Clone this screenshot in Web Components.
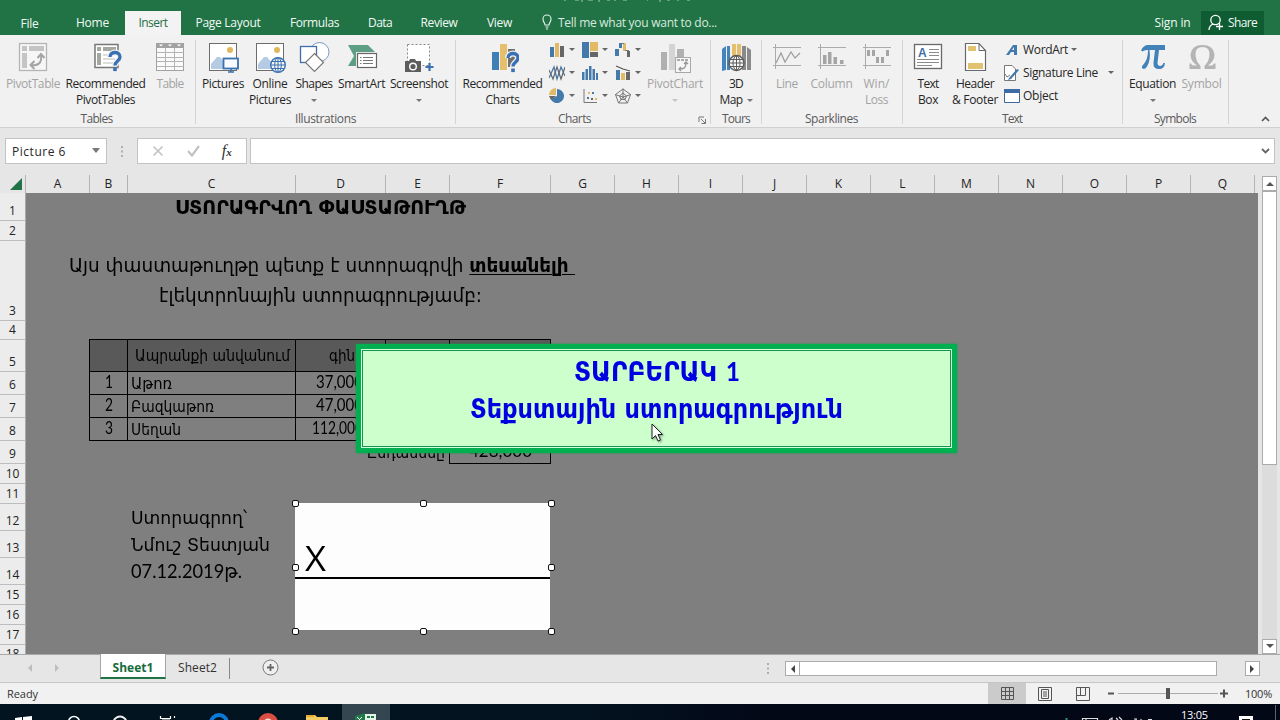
<!DOCTYPE html>
<html lang="en">
<head>
<meta charset="utf-8">
<title>Excel</title>
<style>
html,body{margin:0;height:720px;overflow:hidden;background:#e6e6e6}
body{font-family:"Open Sans","DejaVu Sans",sans-serif;font-size:12px;color:#262626}
</style>
</head>
<body>
<excel-window></excel-window>
<script>
const define=(name,html,init)=>customElements.define(name,class extends HTMLElement{
  connectedCallback(){
    if(this.shadowRoot)return;
    const root=this.attachShadow({mode:'open'});
    const t=document.createElement('template');
    t.innerHTML=typeof html==='function'?html(this):html;
    root.append(t.content.cloneNode(true));
    if(init)init(this,root);
  }
});

/* Text fitted to a width: tracking by default, horizontal scale with the "s" attribute. */
define('fit-text',`<style>:host{display:inline-block;white-space:nowrap;text-align:left}span{display:inline-block;transform-origin:0 50%;white-space:pre}</style><span><slot></slot></span>`,(h,r)=>{
  const w=+h.getAttribute('w');if(!w)return;
  const s=r.querySelector('span'),n=s.getBoundingClientRect().width;
  h.style.width=w+'px';
  if(h.hasAttribute('s'))s.style.transform=`scaleX(${w/n})`;
  else s.style.letterSpacing=(w-n)/h.textContent.length+'px';
});

const S='fill="none" stroke=';
const question=(x,y)=>`<path d="M${x} ${y+4}c0-6 10-6 10 0c0 4-5 4-5 9" ${S}"#f1f1f1" stroke-width="6"/><path d="M${x} ${y+4}c0-6 10-6 10 0c0 4-5 4-5 8.5" ${S}"#3a70b4" stroke-width="3.3"/><rect x="${x+3.2}" y="${y+14.5}" width="3.6" height="3.6" fill="#3a70b4"/>`;
const globe=(c)=>`<circle cx="24" cy="24" r="7.3" fill="#f5f5f5" stroke="${c}" stroke-width="1.4"/><ellipse cx="24" cy="24" rx="3.3" ry="7.3" ${S}"${c}"/><path d="M24 17v14M17 24h14M18 20.500h12M18 27.500h12" ${S}"${c}"/>`;
const photo=`<rect x="2.500" y="2.500" width="27" height="27" fill="#fff" stroke="#6d6d6d"/><circle cx="23" cy="9" r="3" fill="#e2b75c"/><path d="M4 28v-5l6-7h3l6 7v5z" fill="#b5cbe3"/>`;
const ICON={
pivot:`<rect x="2.500" y="2.500" width="27" height="27" stroke="#b4b4b4" stroke-width="1.300" fill="#f6f6f6"/><path d="M5 5h5v5H5zM12 5h15v5H12zM5 12h5v15H5z" fill="#c4c4c4"/><path d="M15 24c7 1 10-3 9-10M20.500 17l3.500-4 3.500 4M17.500 20l-4 4 4 4" ${S}"#a4a4a4" stroke-width="2"/>`,
recpivot:`<rect x="5" y="3.500" width="23" height="23" fill="#fff" stroke="#777" stroke-width="1.500"/><path d="M7 6h4v4H7zM13 6h13v4H13zM7 12h4v12H7z" fill="#a5a8a0"/><path d="M13 14h12M13 18h12M13 22h12" stroke="#bbb"/>${question(20,12)}`,
table:`<rect x="2.500" y="3" width="27" height="26.500" fill="#fafafa" stroke="#a2a2a2"/><path d="M2 2h28v5H2z" fill="#a2a2a2"/><path d="M5 3.500h4l-2 2zM14 3.500h4l-2 2zM23 3.500h4l-2 2z" fill="#fff"/><path d="M3 11.500h27M3 16.500h27M3 20.500h27M3 25.500h27M11.500 7v22M20.500 7v22" stroke="#b4b4b4"/>`,
pictures:`${photo}<rect x="16.500" y="17.500" width="14.500" height="10" fill="#f8fbff" stroke="#3a72b0" stroke-width="1.800"/><path d="M21 31h6M24 28v3" stroke="#3a72b0" stroke-width="1.500"/>`,
online:`${photo}${globe('#3a72b0')}`,
shapes:`<circle cx="21.500" cy="11" r="9.500" fill="#fff" stroke="#7a9cc4"/><rect x="2.500" y="5.500" width="16" height="16" fill="#fff" stroke="#3f6ea6" stroke-width="1.300"/><path d="M16.500 12.500l9 9-9 9-9-9z" fill="#fff" stroke="#777" stroke-width="1.200"/>`,
smartart:`<path d="M2 4h20l7 7-4 6H12v8H2l6-10z" fill="#5c9f85"/><rect x="10" y="11" width="22" height="17" fill="#f1f1f1"/><rect x="11.500" y="12.500" width="19" height="14" fill="#fff" stroke="#666" stroke-width="1.200"/><path d="M17 16.500h10M17 19.500h10M17 22.500h10M14 16.500h1.500M14 19.500h1.500M14 22.500h1.500" stroke="#777"/>`,
screenshot:`<rect x="4.500" y="3.500" width="22" height="21" fill="#fff" stroke="#888" stroke-dasharray="2 2"/><path d="M2 20h4l1-2h5l1 2h5v11H2z" fill="#5d5d5d"/><circle cx="10" cy="25.500" r="3.300" fill="#5d5d5d" stroke="#fff" stroke-width="1.400"/><path d="M26.500 22v8M22.500 26h8" stroke="#3a72b0" stroke-width="2.200"/>`,
reccharts:`<path d="M5 11h7v18H5z" fill="#3f7fb5"/><path d="M13 3h7v26h-7z" fill="#e5bf6c"/><path d="M21 8h7v18h-7z" fill="#707070"/>${question(21,13)}`,
pivotchart:`<path d="M2 11h6v18H2z" fill="#b0b0b0"/><path d="M10 3h6v26h-6z" fill="#d4d4d4"/><path d="M18 8h7v12h-7z" fill="#b0b0b0"/><rect x="16.500" y="16.500" width="15" height="15" fill="#f6f6f6" stroke="#a8a8a8"/><path d="M18 19h12" stroke="#aaa" stroke-width="2" stroke-dasharray="3 1"/><path d="M20 28c5 0 7-1 7-6M25 23l2-2 2 2M22 26l-2 2 2 2" ${S}"#999" stroke-width="1.400"/>`,
map:`<path d="M2 8l4-3v24l-4 1zM7 5h3v24H7z" fill="#4585bb"/><path d="M12 3h4v16h-4zM17 3h4v16h-4z" fill="#e5bf6c"/><path d="M22 5h4v24h-4zM27 6l4 3v20h-4z" fill="#8a8a8a"/><circle cx="16.500" cy="22" r="7.500" fill="#f8f8f8" stroke="#5b5b5b" stroke-width="1.400"/><path d="M16.500 15v14M9 22h15M10 18.500h13M10 25.500h13" stroke="#5b5b5b"/><ellipse cx="16.500" cy="22" rx="3.500" ry="7" ${S}"#5b5b5b"/>`,
line:`<path d="M2 6.500h28M2 24.500h28M4.500 3v25" stroke="#ababab"/><path d="M5 22l5-10 4 9 6-10 4 6 5-5" ${S}"#a0a0a0" stroke-width="1.300"/>`,
column:`<path d="M2 6.500h28M2 24.500h28M4.500 3v25" stroke="#ababab"/><path d="M7 14h3.500v9H7zM12 11h3.500v12H12zM17.500 16H21v7h-3.500zM24 19h3.500v4H24z" fill="#a5a5a5"/>`,
win:`<path d="M2 6.500h28M2 24.500h28M4.500 3v25" stroke="#ababab"/><path d="M6 9h3v6H6zM11 9h3v6h-3zM25 9h3v6h-3zM15 16h3v6h-3zM20 16h3v6h-3z" fill="#a5a5a5"/>`,
textbox:`<rect x="2.500" y="3.500" width="27" height="24" fill="#fff" stroke="#696969" stroke-width="1.300"/><text x="6" y="16" font-family="Liberation Sans" font-weight="bold" font-size="12" fill="#3f6fab">A</text><path d="M17 8.500h10M17 11.500h10M17 14.500h10M5 18.500h22M5 21.500h22M5 24.500h15" stroke="#8c8c8c"/>`,
header:`<path d="M6.500 2.500H20l6.500 7v20h-20z" fill="#fff" stroke="#696969" stroke-width="1.200"/><path d="M20 2.500v7h6.500" ${S}"#696969"/><path d="M9 5h8v5H9zM9 22h15v6H9z" fill="#e2c170"/>`,
pi:`<path d="M4 9.500Q6.500 4 11 4h17v5h-6l-1.500 13q0 3 3 3 2 0 3-3h1.500q-.5 6-6 6-6 0-5.500-6l1.500-13h-5.500Q14 19 10 25.500 8 29 5.500 27.500 4 26 6 24 11 19 11 9 7 8.800 5.500 10.500z" fill="#4282b8"/>`,
omega:`<path d="M3.500 22.500H5q.5 2 3 2h3Q4.500 20 4.500 13.500 5.500 4 16.500 4T28.500 13.500Q28.500 20 22 24.500h3q2.500 0 3-2h1.500V28H18.500v-3Q23.500 20 23.500 13 23.500 6 16.500 6T9.500 13q0 7 5 12v3h-11z" fill="#b4b4b4"/>`
};
define('ribbon-icon',h=>`<style>:host{display:block;width:32px;height:32px}svg{display:block}</style><svg width="32" height="32" viewBox="0 0 32 32">${ICON[h.getAttribute('name')]}</svg>`);

/* Large ribbon button: icon over one or two caption lines; "|w" sets a caption width. */
define('ribbon-button',h=>{
  const l=(h.getAttribute('label')||'').split(';').map(x=>x.split('|'));
  const a=h.getAttribute('arrow');
  return `<style>:host{display:flex;flex-direction:column;align-items:center;flex:none;width:${h.getAttribute('w')}px;color:${h.hasAttribute('off')?'#a3a3a3':'#262626'}}
  ribbon-icon{margin-bottom:3px}.l{display:flex;justify-content:center;align-items:center;height:16px;line-height:16px;gap:4px}
  .a{border:3px solid transparent;border-top-color:${h.hasAttribute('off')?'#c5c5c5':'#777'};border-bottom:0;height:0}</style>
  <ribbon-icon name="${h.getAttribute('icon')}"></ribbon-icon>${l.map((x,i)=>`<div class="l"><fit-text w="${x[1]}">${x[0]}</fit-text>${a==='in'&&i===l.length-1?'<i class="a"></i>':''}</div>`).join('')}${a==='below'?'<div class="l"><i class="a"></i></div>':''}`;
});
define('ribbon-group',h=>`<style>:host{display:flex;box-sizing:border-box;flex:none;position:relative;flex-direction:column;width:${h.getAttribute('w')}px;height:92px;padding-top:6px}
.row{display:flex;height:70px;padding-left:${h.getAttribute('pad')||4}px}.n{display:flex;justify-content:center;height:16px;line-height:16px;color:#5a5a5a}
.n fit-text{margin-left:${h.getAttribute('shift')||0}px}
:host::after{content:"";position:absolute;right:0;top:5px;height:84px;width:1px;background:#d4d4d4}</style><div class="row"><slot></slot></div><div class="n"><fit-text w="${h.getAttribute('nw')}">${h.getAttribute('name')}</fit-text></div>`);

const B='#4379ab',Y='#e2b965',G='#666';
const MINI=[
`<path d="M1 5h4v10H1z" fill="${B}"/><path d="M6 1h4v14H6z" fill="${Y}"/><path d="M11 4h4v11h-4z" fill="${G}"/>`,
`<path d="M0 0h7v16H0z" fill="${B}"/><path d="M8 0h8v9H8z" fill="${Y}"/><path d="M8 10h8v5H8z" fill="${G}"/>`,
`<path d="M0 7h4v7H0zM4 1h3v5H4z" fill="${B}"/><path d="M8 1h3v8H8z" fill="${Y}"/><path d="M12 9h3v6h-3z" fill="${G}"/><path d="M6 1.500h3M10 8.500h4" fill="none" stroke="#777"/>`,
`<path d="M0 13L5 2l3 12 4-12 4 9" fill="none" stroke="${B}" stroke-width="1.300"/><path d="M0 5l4 9 4-12 4 12 4-12" fill="none" stroke="#666" stroke-width="1.200"/>`,
`<path d="M0 7h2.500v8H0zM3.500 4H6v11H3.500zM7 1h2.500v14H7zM10.500 4H13v11h-2.500zM14 8h2v7h-2z" fill="${B}"/>`,
`<path d="M1 5h4v10H1z" fill="${B}"/><path d="M6 8h4v7H6z" fill="${Y}"/><path d="M11 7h4v8h-4z" fill="${G}"/><path d="M1 1l7 3 7 2" fill="none" stroke="#555" stroke-width="1.300"/>`,
`<path d="M8 8V1a7 7 0 1 1-6.300 10z" fill="${B}"/><path d="M7 7H0a7 7 0 0 1 7-7z" fill="${Y}"/><path d="M7 8l-5 4-2-4z" fill="${G}"/>`,
`<path d="M2 1v13.500h13" fill="none" stroke="#777"/><path d="M5 9h2v2H5zM10 4h2v2h-2z" fill="${B}"/><path d="M6 4h2v2H6zM13 10h2v2h-2z" fill="${Y}"/><path d="M9 10h2v2H9z" fill="#666"/>`,
`<path d="M8 1l7.500 5.500L12.500 15h-9L.5 6.500zM8 5l3.500 3L10 11.500H6L4.500 8zM8 .5V9M8 9L3.500 15M0 6.500L8 9l8-2.500M8 9l4.500 6" fill="none" stroke="#777"/>`];
define('chart-gallery',`<style>:host{display:grid;grid-template-columns:repeat(3,33px);grid-template-rows:repeat(3,23px);width:100px;padding-left:4px;box-sizing:border-box;flex:none}
div{display:flex;align-items:center;gap:4px;height:17px}svg{flex:none}i{border:3px solid transparent;border-top-color:#666;border-bottom:0}</style>${MINI.map(m=>`<div><svg width="16" height="16">${m}</svg><i></i></div>`).join('')}`);

define('text-tools',`<style>:host{display:grid;grid-template-rows:repeat(3,23px);margin-left:3px}div{display:flex;align-items:center;height:17px;gap:3px;white-space:nowrap}i{border:3px solid transparent;border-top-color:#666;border-bottom:0}svg{flex:none}</style>
<div><svg width="16" height="16"><path d="M2 13L9 3h4v10h-3v-3H7l-2 3zM8 8h2V5z" fill="#4379ab" fill-rule="evenodd"/></svg><fit-text w="45">WordArt</fit-text><i></i></div>
<div><svg width="16" height="16"><path d="M.5.500H8l3.500 3.500v11.500H.5z" fill="#fff" stroke="#777"/><path d="M5 13l8-9 2 1-8 9-3 1z" fill="#4379ab"/><path d="M1 9l2 3 3-2" fill="none" stroke="#777"/></svg><fit-text w="75">Signature Line</fit-text><i style="margin-left:7px"></i></div>
<div><svg width="16" height="14"><path d="M.5.500h15v13H.5z" fill="#fff" stroke="#3e689c"/><path d="M0 0h16v4H0z" fill="#3e6aa5"/></svg><fit-text w="35">Object</fit-text></div>`);

define('excel-ribbon',`<style>:host{display:flex;position:relative;height:92px;background:#f1f1f1;border-bottom:1px solid #d0d0d0;box-sizing:content-box}
.c{position:absolute;right:10px;bottom:5px}.d{position:absolute;left:698px;top:81px}</style>
<ribbon-group w="196" name="Tables" nw="32" shift="-3"><ribbon-button off w="58" icon="pivot" label="PivotTable|54"></ribbon-button><ribbon-button w="87" icon="recpivot" label="Recommended|80;PivotTables|59"></ribbon-button><ribbon-button off w="42" icon="table" label="Table|27"></ribbon-button></ribbon-group>
<ribbon-group w="260" name="Illustrations" nw="61" shift="-1"><ribbon-button w="46" icon="pictures" label="Pictures|42"></ribbon-button><ribbon-button w="48" icon="online" label="Online|35;Pictures|42"></ribbon-button><ribbon-button w="40" icon="shapes" arrow="below" label="Shapes|37"></ribbon-button><ribbon-button w="55" icon="smartart" label="SmartArt|47"></ribbon-button><ribbon-button w="60" icon="screenshot" arrow="below" label="Screenshot|58"></ribbon-button></ribbon-group>
<ribbon-group w="255" name="Charts" nw="33" shift="-18"><ribbon-button w="85" icon="reccharts" label="Recommended|80;Charts|34"></ribbon-button><chart-gallery></chart-gallery><ribbon-button off w="60" icon="pivotchart" arrow="below" label="PivotChart|56"></ribbon-button></ribbon-group>
<ribbon-group w="51" name="Tours" nw="28" pad="0" shift="-1"><ribbon-button w="50" icon="map" arrow="in" label="3D|14;Map|23"></ribbon-button></ribbon-group>
<ribbon-group w="141" name="Sparklines" nw="53" shift="-2"><ribbon-button off w="42" icon="line" label="Line|22"></ribbon-button><ribbon-button off w="47" icon="column" label="Column|42"></ribbon-button><ribbon-button off w="43" icon="win" label="Win/|26;Loss|23"></ribbon-button></ribbon-group>
<ribbon-group w="220" name="Text" nw="20" shift="-2"><ribbon-button w="42" icon="textbox" label="Text|21;Box|20"></ribbon-button><ribbon-button w="52" icon="header" label="Header|38;&amp; Footer|46"></ribbon-button><text-tools></text-tools></ribbon-group>
<ribbon-group w="106" name="Symbols" nw="42" shift="-2"><ribbon-button w="51" icon="pi" arrow="below" label="Equation|47"></ribbon-button><ribbon-button off w="47" icon="omega" label="Symbol|40"></ribbon-button></ribbon-group>
<svg class="d" width="9" height="8"><path d="M1 6V1h5M3 3l4 4M7.500 3v4.500H3.500" fill="none" stroke="#777"/></svg>
<svg class="c" width="9" height="6"><path d="M1 5l3.500-3.500L8 5" fill="none" stroke="#555" stroke-width="1.600"/></svg>`);

define('ribbon-tabs',`<style>:host{display:flex;height:35px;background:#217346;color:#f3faf5;box-sizing:border-box;padding-top:11px;position:relative}
div{height:24px;line-height:23px;display:flex;justify-content:center;flex:none;box-sizing:border-box}.on{background:#f3f3f3;color:#1e6f43}
.tell{justify-content:start;padding-left:15px;gap:6px;color:#d8eadf}.share{background:#0f5c32;width:63px;gap:4px}
.clip{position:absolute;top:0;left:563px}</style>
<svg class="clip" width="130" height="2"><path d="M1 0h2M12 0h4M19 0v2M25 0h5M36 0v2M44 0h3M52 0v1M60 0h4M84 0h1M97 0v2M104 0h3M114 0h2M124 0h3" stroke="#a8c9b6"/></svg>
<div style="width:59px;padding-top:1px"><fit-text w="18">File</fit-text></div><div style="width:66px;padding-left:1px"><fit-text w="33">Home</fit-text></div><div class="on" style="width:56px"><fit-text w="29">Insert</fit-text></div><div style="width:94px"><fit-text w="65">Page Layout</fit-text></div><div style="width:79px"><fit-text w="49">Formulas</fit-text></div><div style="width:52px"><fit-text w="24">Data</fit-text></div><div style="width:66px"><fit-text w="37">Review</fit-text></div><div style="width:55px"><fit-text w="25">View</fit-text></div>
<div class="tell" style="width:617px"><svg width="10" height="16" style="margin-top:3px"><path d="M3 11C3 9 1 8 1 5a4 4 0 0 1 8 0c0 3-2 4-2 6zM3.500 13h3M4 15h2" fill="none" stroke="#e5f2ea" stroke-width="1.100"/></svg><fit-text w="159">Tell me what you want to do...</fit-text></div>
<div style="width:57px"><fit-text w="36">Sign in</fit-text></div><div class="share"><svg width="16" height="17" style="margin-top:3px"><circle cx="7.500" cy="6" r="4.700" fill="none" stroke="#fff" stroke-width="1.300"/><path d="M1 16c0-3 2-5 4-6M8 12.500h7M11.500 9v7" fill="none" stroke="#fff" stroke-width="1.300"/></svg><fit-text w="29">Share</fit-text></div>`);

define('formula-bar',`<style>:host{display:flex;height:46px;box-sizing:border-box;padding:10px 5px 10px;background:#e6e6e6}
div{box-sizing:border-box;border:1px solid #c3c3c3;background:#fff;height:26px;display:flex;align-items:center}
.n{width:102px;justify-content:space-between;padding:0 6px}.n i{border:4px solid transparent;border-top:5px solid #777;border-bottom:0;margin-top:-2px}
.b{width:110px;justify-content:space-around;padding:0 3px}.f{flex:1;margin-left:3px;justify-content:flex-end;padding-right:4px}.dots{width:30px;display:flex;align-items:center;justify-content:center}</style>
<div class="n"><fit-text w="54">Picture 6</fit-text><i></i></div><span class="dots"><svg width="2" height="13"><path d="M1 1v2M1 5.500v2M1 10v2" stroke="#9d9d9d" stroke-width="1.500"/></svg></span>
<div class="b"><svg width="12" height="12"><path d="M1.500 1.500l9 9M10.500 1.500l-9 9" stroke="#c2c2c2" stroke-width="1.600"/></svg><svg width="13" height="12"><path d="M1 6l4 4.500L12 1" fill="none" stroke="#c2c2c2" stroke-width="2.200"/></svg><span style="font:italic 16px/20px 'Liberation Serif',serif;color:#333;white-space:nowrap">f<span style="font-size:11px;font-weight:bold">x</span></span></div>
<div class="f"><svg width="9" height="6"><path d="M1 1l3.500 3.500L8 1" fill="none" stroke="#666" stroke-width="1.800"/></svg></div>`);

const COLS=[64,38,168,90,64,101,...Array(11).fill(64)];
const ROWS=[28,20,80,19,32,23,23,23,23,20,20,27,27,27,20,20,20,9];
define('column-headers',`<style>:host{display:flex;height:19px;padding-right:22px;background:#e6e6e6}
div{box-sizing:border-box;flex:none;border-right:1px solid #b3b3b3;text-align:center;line-height:18px;margin-top:1px;color:#222;height:18px}.k{width:26px;display:flex;align-items:center;justify-content:end;padding-right:3px}</style>
<div class="k"><svg width="12" height="12"><path d="M12 0v12H0z" fill="#217346"/></svg></div>${COLS.map((w,i)=>`<div style="width:${w}px">${String.fromCharCode(65+i)}</div>`).join('')}`);
define('row-headers',`<style>:host{display:block;width:26px;flex:none;overflow:hidden;background:#ececec;height:461px}
div{box-sizing:border-box;border-bottom:1px solid #bdbdbd;border-right:1px solid #aaa;display:flex;align-items:flex-end;justify-content:center;line-height:17px;color:#222;padding-bottom:1px}
div:last-child{align-items:flex-start;border-bottom:0}</style>${ROWS.map((h,i)=>`<div style="height:${h}px">${i+1}</div>`).join('')}`);

/* Cell: row r, column c; text width w, font size fs, baseline from the row top. Figures are set in Lato. */
const cell=(r,c,txt,w,fs,base,o={})=>`<div class="t" style="grid-area:${r}/${c}/span 1/span ${o.span||1};justify-content:${o.a||'start'};padding-left:${o.pl||0}px;line-height:20px;margin-top:${(base-10-(o.num?.387:.346)*fs).toFixed(2)}px;font-size:${fs}px;${o.num?'font-family:Lato,\'DejaVu Sans\',sans-serif;':''}${o.css||''}"><fit-text s w="${w}">${txt}</fit-text></div>`;
const box=(r,c,css='')=>`<div style="grid-area:${r}/${c};border:solid #000;border-width:0 1px 1px 0;${css}"></div>`;
define('sheet-grid',`<style>:host{display:grid;position:relative;width:1232px;height:461px;flex:none;overflow:hidden;background:#7f7f7f;color:#000;font-family:"DejaVu Sans",sans-serif;
grid-template-columns:64px 38px 168px 90px 64px 101px 1fr;grid-template-rows:${ROWS.map(x=>x+'px').join(' ')}}
div{box-sizing:border-box;min-width:0;min-height:0}.t{display:flex;height:20px;white-space:nowrap}.t fit-text{flex:none}
signature-picture{grid-area:12/4/span 6/span 3}b{text-decoration:underline;text-decoration-thickness:1px;text-underline-offset:2px}</style>
${[5,6,7,8].map(r=>[2,3,4,5,6].map(c=>box(r,c,(r===5?'background:#595959;margin-top:-1px;border-top-width:1px;':'')+(c===2?'margin-left:-1px;border-left-width:1px;':''))).join('')).join('')}
${box(9,6,'margin-left:-1px;border-left-width:1px')}
${cell(1,2,'ՍՏՈՐԱԳՐՎՈՂ ՓԱՍՏԱԹՈՒՂԹ',291,19,21,{span:5,a:'center',css:'font-weight:bold;'})}
${cell(3,2,'Այս փաստաթուղթը պետք է ստորագրվի <b>տեսանելի </b>',506,20,31,{span:5,a:'center',pl:3})}
${cell(3,2,'էլեկտրոնային ստորագրությամբ:',323,20,61,{span:5,a:'center'})}
${cell(5,3,'Ապրանքի անվանում',155,15,21,{a:'center'})}${cell(5,4,'գին',26,15,21,{a:'center',pl:2})}
${['Աթոռ|41|37,000|47','Բազկաթոռ|83|47,000|47','Սեղան|50|112,000|51'].map((x,i)=>{const[a,w,n,v]=x.split('|');return cell(6+i,2,i+1,8,17,17,{a:'center',num:1})+cell(6+i,3,a,w,15.500,17,{pl:3})+cell(6+i,4,n,v,17,17,{pl:i===2?16:20,num:1})}).join('')}
${cell(9,4,'Ընդամենը',78,15.500,17,{pl:71,span:2})}${cell(9,6,'428,000',63,17,17,{a:'center',num:1})}
${cell(12,3,'Ստորագրող՝',116,18,20,{pl:3})}${cell(13,3,'Նմուշ Տեստյան',139,18,20,{pl:3})}${cell(14,3,'07.12.2019թ.',111,19,20,{pl:3,num:1})}
<signature-picture></signature-picture>`);

define('signature-picture',`<style>:host{display:block;position:relative;width:255px;height:127px;background:#fdfdfd;margin:-1px 0 0 -1px}
.x{height:74px;box-sizing:border-box;padding:37px 0 0 10px;font:34px/37px "Open Sans",sans-serif;color:#000}.l{height:2px;background:#000}
i{position:absolute;width:5px;height:5px;border:1px solid #111;background:#fff;border-radius:2px;margin:-3px 0 0 -3px}</style>
<div class="x"><fit-text s w="21">X</fit-text></div><div class="l"></div>${[[0,0],[50,0],[100,0],[0,50],[100,50],[0,100],[50,100],[100,100]].map(p=>`<i style="left:${Math.round(p[0]*2.56)}px;top:${Math.round(p[1]*1.28)}px"></i>`).join('')}`);

define('vertical-scroll',`<style>:host{display:flex;flex-direction:column;width:15px;margin-left:4px;margin-top:-17px;height:478px;background:#dcdcdc;flex:none}
div{box-sizing:border-box;background:#fff;border:1px solid #ababab;height:15px;display:flex;align-items:center;justify-content:center}.th{height:274px;margin-bottom:auto}</style>
<div><svg width="8" height="5"><path d="M0 5l4-4 4 4z" fill="#555"/></svg></div><div class="th"></div><div><svg width="8" height="5"><path d="M0 0h8L4 4z" fill="#555"/></svg></div>`);

define('sheet-tabs',`<style>:host{display:flex;height:28px;background:#e6e6e6;border-bottom:1px solid #c6c6c6;box-sizing:content-box;position:relative;box-shadow:inset 0 1px #a9a9a9}
.ar{width:100px;display:flex;gap:23px;padding:10px 0 0 27px;box-sizing:border-box}.on{box-sizing:border-box;width:66px;height:25px;background:#fff;border:solid #a6a6a6;border-width:0 1px 0;border-bottom:2px solid #217346;text-align:center;line-height:27px;font-weight:bold;color:#176b3b;z-index:1}
.s{width:63px;text-align:center;border-right:1px solid #888;height:21px;margin-top:4px;line-height:20px;color:#333}.p{margin:5px 0 0 32px}
.dots{margin:8px 0 0 488px}.h{display:flex;margin:7px 0 0 16px;width:475px;height:15px}.h div{box-sizing:border-box;border:1px solid #ababab;background:#fff;width:15px;display:flex;align-items:center;justify-content:center}.h .th{width:418px;margin-left:-1px;margin-right:auto}</style>
<div class="ar"><svg width="5" height="8"><path d="M5 0v8L1 4z" fill="#bdbdbd"/></svg><svg width="5" height="8"><path d="M0 0v8l4-4z" fill="#bdbdbd"/></svg></div>
<div class="on"><fit-text w="41">Sheet1</fit-text></div><div class="s"><fit-text w="39">Sheet2</fit-text></div>
<svg class="p" width="17" height="17"><circle cx="8.500" cy="8.500" r="7.500" fill="#efefef" stroke="#777"/><path d="M8.500 5v7M5 8.500h7" stroke="#666" stroke-width="1.800"/></svg>
<svg class="dots" width="2" height="13"><path d="M1 1v2M1 5.500v2M1 10v2" stroke="#9d9d9d" stroke-width="1.500"/></svg>
<div class="h"><div><svg width="5" height="8"><path d="M5 0v8L1 4z" fill="#444"/></svg></div><div class="th"></div><div><svg width="5" height="8"><path d="M0 0v8l4-4z" fill="#444"/></svg></div></div>`);

define('status-bar',`<style>:host{display:flex;height:21px;background:#f1f1f1;align-items:center;line-height:19px;font-size:11px;color:#333}
.r{margin-left:7px;margin-right:auto}.v{display:flex;align-items:center;justify-content:center;width:38px;height:21px}.on{background:#cbcbcb;width:38px}
.z{width:122px;height:13px;margin:0 16px 0 5px}.pc{margin-right:8px}</style>
<span class="r"><fit-text w="31">Ready</fit-text></span>
<div class="v on"><svg width="13" height="13"><path d="M.5.500h12v12H.5zM4.500 0v13M8.500 0v13M0 4.500h13M0 8.500h13" fill="none" stroke="#555"/></svg></div>
<div class="v"><svg width="14" height="14"><path d="M.5.500h13v13H.5zM3.500 2.500h7v9h-7zM5 5h4M5 7h4M5 9h4" fill="none" stroke="#555"/></svg></div>
<div class="v"><svg width="14" height="14"><path d="M.5.500h13v13H.5zM4.500 0v8.500h5V0M0 8.500h5" fill="none" stroke="#555"/></svg></div>
<svg class="z" width="122" height="13"><path d="M11 6.500h100" stroke="#aaa"/><path d="M1 6.500h6M113 6.500h8M117 2.500v8" stroke="#555" stroke-width="2"/><path d="M59 1h4v11h-4z" fill="#555"/></svg>
<span class="pc"><fit-text w="27">100%</fit-text></span>`);

define('task-bar',`<style>:host{display:flex;height:16px;overflow:hidden;background:linear-gradient(90deg,#01141f,#03131f 45%,#030817 60%,#030817)}svg{display:block}</style>
<svg width="1280" height="16"><rect x="342" width="48" height="16" fill="#34464f"/>
<path d="M15 14l7-1v3h-7zM23 13l9-1v4h-9z" fill="#fff"/><circle cx="74" cy="18" r="5.500" fill="none" stroke="#fff" stroke-width="1.500"/><circle cx="120" cy="19" r="6.500" fill="none" stroke="#eee" stroke-width="2"/>
<path d="M160.500 12v2.500h10V12M174.500 12v2M162 16h8" fill="none" stroke="#fff" stroke-width="1.200"/>
<circle cx="219" cy="19" r="8" fill="none" stroke="#0b7ad6" stroke-width="4"/><circle cx="268" cy="19" r="10" fill="#dc4e42"/><circle cx="268" cy="19" r="4.500" fill="#f1dfdc"/>
<path d="M306 11h9l2 2h11v3h-22z" fill="#f3cd63"/><path d="M306 11h8v2h-8z" fill="#e3ad34"/>
<path d="M355 12l10-3v7h-10z" fill="#1f7a46"/><path d="M365 10h11v6h-11z" fill="#e5f1e9"/><path d="M367 12h3v2h-3zM371 12h3v2h-3z" fill="#1f7a46"/><path d="M357 13l3 3M362 13l-3 3" stroke="#fff"/>
<path d="M1066.500 14v2" stroke="#2b8f76" stroke-width="2"/><path d="M1082.500 16v-1.500h15V16M1086 15v1M1109 16l3-2v2M1116 14l2 2M1119 13l3 3M1134 15h3M1136 15v1M1141 15v1M1148 15.500h4" fill="none" stroke="#ddd" stroke-width="1.200"/>
<text x="1181" y="14.500" textLength="27" font-family="Open Sans" font-size="11" fill="#fff">13:05</text><path d="M1239 12h14v4h-14z" fill="#fff"/><path d="M1242 15h8v1h-8z" fill="#111"/><path d="M1275.500 1v15" stroke="#5b6270"/></svg>`);

define('title-banner',`<style>:host{display:block;position:absolute;left:356px;top:344px;width:601px;height:109px;box-sizing:border-box;background:#d4ffd4;border:5px solid #00b050;border-radius:1px;box-shadow:0 0 2px #00a04b;padding:1px}
section{box-sizing:border-box;height:97px;background:#cfc;border:1px solid #159553;color:#0000e0;font:bold 26px/37px "DejaVu Sans",sans-serif;display:flex;flex-direction:column;align-items:center;padding-top:2px}span{font-family:Lato,sans-serif}</style>
<section><fit-text s w="166">ՏԱՐԲԵՐԱԿ <span>1</span></fit-text><fit-text s w="373">Տեքստային ստորագրություն</fit-text></section>`);
define('mouse-pointer',`<style>:host{display:block;position:absolute;left:651px;top:423px;filter:drop-shadow(1px 1px 1px #0006)}svg{display:block}</style><svg width="13" height="20"><path d="M1 1v15l3.500-3.500L7 18l2.500-1-2.500-5.500h4.500z" fill="#fff" stroke="#222"/></svg>`);

define('excel-window',`<style>:host{display:block;position:relative;width:1280px;height:720px;overflow:hidden}.g{display:flex;height:461px}</style>
<ribbon-tabs></ribbon-tabs><excel-ribbon></excel-ribbon><formula-bar></formula-bar><column-headers></column-headers>
<div class="g"><row-headers></row-headers><sheet-grid></sheet-grid><vertical-scroll></vertical-scroll></div>
<sheet-tabs></sheet-tabs><status-bar></status-bar><task-bar></task-bar><title-banner></title-banner><mouse-pointer></mouse-pointer>`);
</script>
</body>
</html>
